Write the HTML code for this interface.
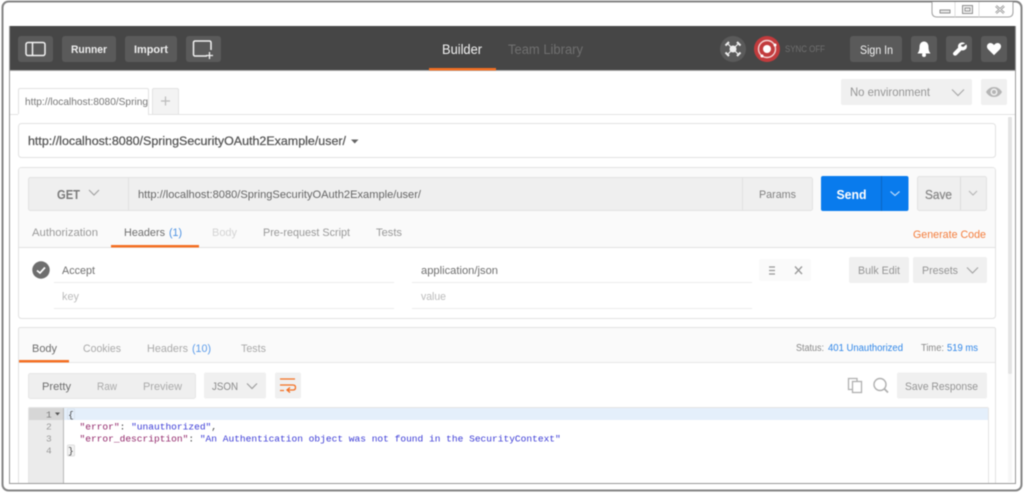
<!DOCTYPE html>
<html><head><meta charset="utf-8"><style>
html,body{margin:0;padding:0;background:#fff;width:1024px;height:493px;overflow:hidden}
svg{display:block;filter:blur(.4px)}
text{font-family:"Liberation Sans",sans-serif;font-size:11px;fill:#808080}
.m{font-family:"Liberation Mono",monospace;font-size:9.56px}
</style></head><body>
<svg width="1024" height="493" viewBox="0 0 1024 493" xmlns="http://www.w3.org/2000/svg">
<rect x="2.500" y="1.500" width="1019" height="489" rx="6" fill="#fff" stroke="#858585" stroke-width="2"/>
<path d="M9.500 26V483.500H1015.500V26" fill="none" stroke="#999" stroke-width="1"/>
<!-- window buttons -->
<path d="M932 2V12q0 5 5 5H1008q5 0 5-5V2" fill="#fff" stroke="#a0a0a0"/>
<path d="M955 2V17M979 2V17" stroke="#ddd"/>
<rect x="940" y="10" width="10" height="3" fill="#e8e8e8" stroke="#777" stroke-width=".8"/>
<rect x="962.500" y="5.500" width="10" height="8" fill="#eee" stroke="#777" stroke-width=".8"/><rect x="965" y="8" width="5" height="3" fill="none" stroke="#777" stroke-width=".7"/>
<path d="M996 6L1004 13M1004 6L996 13" stroke="#888" stroke-width="2.400"/><path d="M996 6L1004 13M1004 6L996 13" stroke="#eee" stroke-width=".9"/>
<!-- header -->
<rect x="10" y="26" width="1005" height="44" fill="#464646"/>
<rect x="10" y="70" width="1005" height="1" fill="#aaa"/>
<g fill="#5a5a5a">
<rect x="18" y="36" width="35" height="26" rx="3"/><rect x="62" y="36" width="54" height="26" rx="3"/><rect x="125" y="36" width="52" height="26" rx="3"/><rect x="186" y="36" width="35" height="26" rx="3"/>
<rect x="850" y="36" width="52" height="26" rx="3"/><rect x="911" y="36" width="26" height="26" rx="3"/><rect x="946" y="36" width="26" height="26" rx="3"/><rect x="981" y="36" width="26" height="26" rx="3"/>
<circle cx="733" cy="49" r="13"/></g>
<rect x="26" y="42.500" width="19" height="13" rx="2" fill="none" stroke="#f2f2f2" stroke-width="1.500"/><path d="M32.500 43V55" stroke="#f2f2f2" stroke-width="1.500"/>
<text x="71" y="53" textLength="36" lengthAdjust="spacingAndGlyphs" style="font-weight:700;fill:#eee;font-size:11px">Runner</text>
<text x="134" y="53" textLength="34" lengthAdjust="spacingAndGlyphs" style="font-weight:700;fill:#eee;font-size:11px">Import</text>
<path d="M207 56H195a1.500 1.500 0 0 1-1.500-1.500V42.500A1.500 1.500 0 0 1 195 41H209.500a1.500 1.500 0 0 1 1.500 1.500V50" fill="none" stroke="#f2f2f2" stroke-width="1.500"/><path d="M206 55.500H213M209.500 52V59" stroke="#f2f2f2" stroke-width="1.300"/>
<text x="442" y="54" textLength="40" lengthAdjust="spacingAndGlyphs" style="font-size:13.500px;fill:#f2f2f2;font-weight:400">Builder</text>
<rect x="429" y="68" width="67" height="2.500" fill="#f47023"/>
<text x="508" y="54" textLength="75" lengthAdjust="spacingAndGlyphs" style="font-size:13.500px;fill:#6f6f6f">Team Library</text>
<!-- satellite -->
<g fill="none" stroke="#eee"><circle cx="733" cy="49" r="3.500" fill="#eee" stroke="none"/><path d="M728 44L738 54M738 44L728 54" stroke-width="1.200"/><path d="M725.500 45.500L729 42M737 56L740.500 52.500M737 42L740.500 45.500M725.500 52.500L729 56" stroke-width="2"/></g>
<!-- sync -->
<circle cx="767" cy="49" r="13" fill="#c23b3d"/><circle cx="767" cy="49" r="8.500" fill="none" stroke="#f3d5d5" stroke-width="1.400"/><circle cx="767" cy="49" r="4" fill="#fff"/><circle cx="775" cy="45" r="1.500" fill="#fff"/><circle cx="762" cy="56" r="1.500" fill="#fff"/>
<text x="785" y="52" textLength="40" lengthAdjust="spacingAndGlyphs" style="font-size:8.800px;fill:#707070">SYNC OFF</text>
<text x="860" y="54" textLength="33" lengthAdjust="spacingAndGlyphs" style="font-size:12.200px;fill:#f2f2f2">Sign In</text>
<path d="M924 41.500c-3 0-4.500 2.500-4.500 5.500 0 3.500-1 5-2 6.500h13c-1-1.500-2-3-2-6.500 0-3-1.500-5.500-4.500-5.500z" fill="#fff"/><circle cx="924" cy="55" r="2" fill="#fff"/>
<path transform="translate(959 49) scale(.8) translate(-960 -49.500)" d="M966.500 42.500c-2.500-1.500-6-.5-7 2-.5 1.500-.3 2.500 0 3.500l-6 6c-1 1 -.5 2.500 .5 3s2 .5 3-.5l6-6c1.500 .5 3.500 .3 5-1 1.500-1.500 1.700-3.300 1-5l-3.500 3-3-1-.5-2.500z" fill="#fff" stroke="#fff" stroke-width="1"/>
<path transform="translate(994 49) scale(.88) translate(-994 -49.500)" d="M994 56.500l-6.500-6.500c-2-2-2-5 0-6.500s4.500-1 6.500 1.500c2-2.500 4.500-3 6.500-1.500s2 4.500 0 6.500z" fill="#fff"/>
<!-- tabs -->
<path d="M10 114.500H1015" stroke="#e4e4e4"/>
<path d="M18.500 115V90q0-1.500 1.500-1.500H147q1.500 0 1.500 1.500V115" fill="#fff" stroke="#e2e2e2"/>
<rect x="18" y="114" width="130" height="2" fill="#fff"/>
<text x="25" y="105" textLength="123" lengthAdjust="spacingAndGlyphs" style="font-size:10.200px;fill:#777">http://localhost:8080/Spring</text>
<path d="M152.500 114V90q0-1.500 1.500-1.500H177q1.500 0 1.500 1.500V114" fill="#f3f3f3" stroke="#e2e2e2"/>
<path d="M161 101H170M165.500 96.500V105.500" stroke="#bbb" stroke-width="1.200"/>
<rect x="841" y="79" width="131" height="26" rx="2" fill="#f0f0f0"/>
<text x="850" y="96" textLength="80" lengthAdjust="spacingAndGlyphs" style="font-size:11.700px;fill:#959595">No environment</text>
<path d="M952 89.500L958 95.500L964 89.500" fill="none" stroke="#aaa" stroke-width="1.200"/>
<rect x="981" y="79" width="26" height="26" rx="2" fill="#f0f0f0"/>
<path d="M986 92c2-3.500 5-5 8-5s6 1.500 8 5c-2 3.500-5 5-8 5s-6-1.500-8-5z" fill="#b5b5b5"/><circle cx="994" cy="92" r="3.500" fill="#f0f0f0"/><circle cx="994" cy="92" r="2" fill="#b5b5b5"/>
<!-- scrollbar -->
<rect x="1008" y="117" width="4" height="365" fill="#f7f7f7"/><rect x="1008" y="117" width="4" height="257" rx="1.500" fill="#e4e4e4"/>
<!-- url box -->
<rect x="18.500" y="123.500" width="977" height="34" rx="3" fill="#fff" stroke="#e2e2e2"/>
<text x="28" y="145" textLength="318" lengthAdjust="spacingAndGlyphs" style="font-size:12.300px;fill:#555;font-weight:400;stroke:#555;stroke-width:.25">http://localhost:8080/SpringSecurityOAuth2Example/user/</text>
<path d="M351 139.500H358.500L354.700 143.500z" fill="#666"/>
<!-- request panel -->
<rect x="18.500" y="167.500" width="977" height="151" rx="3" fill="#fff" stroke="#e2e2e2"/>
<path d="M19 247V170q0-2 2-2H993q2 0 2 2V247z" fill="#fafafa"/>
<path d="M19 247.500H995" stroke="#e2e2e2"/>
<rect x="28.500" y="177.500" width="784" height="33" rx="2" fill="#efefef" stroke="#e2e2e2"/>
<path d="M128.500 178V210M742.500 178V210" stroke="#e2e2e2"/>
<text x="57" y="199" textLength="23" lengthAdjust="spacingAndGlyphs" style="font-size:12.500px;font-weight:700;fill:#7a7a7a">GET</text>
<path d="M89 190L94 195L99 190" fill="none" stroke="#a5a5a5" stroke-width="1.200"/>
<text x="138" y="198" textLength="283" lengthAdjust="spacingAndGlyphs" style="font-size:11.300px;fill:#666">http://localhost:8080/SpringSecurityOAuth2Example/user/</text>
<text x="759" y="198" textLength="37" lengthAdjust="spacingAndGlyphs" style="font-size:11.300px;fill:#808080">Params</text>
<rect x="821" y="176" width="87.500" height="35" rx="2" fill="#097bed"/>
<path d="M881.500 176V211" stroke="#0a67c4"/>
<text x="836.500" y="199" textLength="30" lengthAdjust="spacingAndGlyphs" style="font-size:13px;font-weight:700;fill:#fff">Send</text>
<path d="M890.500 191.500L895 195.500L899.500 191.500" fill="none" stroke="#b8d8fb" stroke-width="1.200"/>
<rect x="917.500" y="176.500" width="69" height="34" rx="2" fill="#efefef" stroke="#e2e2e2"/>
<path d="M960.500 177V210" stroke="#dcdcdc"/>
<text x="925" y="199" textLength="27" lengthAdjust="spacingAndGlyphs" style="font-size:12.800px;fill:#888;stroke:#888;stroke-width:.25">Save</text>
<path d="M969 191L973 195L977 191" fill="none" stroke="#b5b5b5" stroke-width="1.100"/>
<text x="32" y="236" textLength="66" lengthAdjust="spacingAndGlyphs" style="font-size:11.300px;fill:#999">Authorization</text>
<text x="124" y="236" textLength="41" lengthAdjust="spacingAndGlyphs" style="font-size:11.300px;fill:#6e6e6e">Headers</text>
<text x="169" y="236" textLength="13" lengthAdjust="spacingAndGlyphs" style="font-size:11.300px;fill:#4a90e2">(1)</text>
<text x="212" y="236" textLength="25" lengthAdjust="spacingAndGlyphs" style="font-size:11.300px;fill:#d4d4d4">Body</text>
<text x="263" y="236" textLength="87" lengthAdjust="spacingAndGlyphs" style="font-size:11.300px;fill:#999">Pre-request Script</text>
<text x="376" y="236" textLength="26" lengthAdjust="spacingAndGlyphs" style="font-size:11.300px;fill:#999">Tests</text>
<text x="913" y="238" textLength="73" lengthAdjust="spacingAndGlyphs" style="font-size:11.300px;fill:#f47d3c">Generate Code</text>
<rect x="111" y="245" width="88" height="2.500" fill="#f47023"/>
<circle cx="41" cy="270" r="8.700" fill="#6e6e6e"/><path d="M37 270.500L40 273L45 267.500" fill="none" stroke="#fff" stroke-width="1.700"/>
<text x="62" y="274" textLength="33" lengthAdjust="spacingAndGlyphs" style="font-size:11.300px;fill:#707070">Accept</text>
<text x="62" y="300" textLength="17" lengthAdjust="spacingAndGlyphs" style="font-size:11.300px;fill:#bbb">key</text>
<text x="421" y="274" textLength="77" lengthAdjust="spacingAndGlyphs" style="font-size:11.300px;fill:#707070">application/json</text>
<text x="421" y="300" textLength="25" lengthAdjust="spacingAndGlyphs" style="font-size:11.300px;fill:#bbb">value</text>
<path d="M54 282.500H394M54 308.500H394M412 282.500H752M412 308.500H752" stroke="#ededed"/>
<rect x="759" y="259" width="52" height="22" rx="2" fill="#fafafa"/>
<path d="M769 267H775M769 270.500H775M769 274H775" stroke="#999" stroke-width="1.200"/>
<path d="M795 266.500L802 274M802 266.500L795 274" stroke="#999" stroke-width="1.300"/>
<rect x="849" y="257" width="60" height="26" rx="2" fill="#f0f0f0"/>
<rect x="913" y="257" width="74" height="26" rx="2" fill="#f0f0f0"/>
<text x="858" y="274" textLength="42" lengthAdjust="spacingAndGlyphs" style="font-size:11.300px;fill:#959595">Bulk Edit</text>
<text x="922" y="274" textLength="36" lengthAdjust="spacingAndGlyphs" style="font-size:11.300px;fill:#959595">Presets</text>
<path d="M967 267.500L972.500 273L978 267.500" fill="none" stroke="#a5a5a5" stroke-width="1.200"/>
<!-- response panel -->
<path d="M18.500 483V329.500q0-2 2-2H993.500q2 0 2 2V483" fill="#fff" stroke="#e2e2e2"/>
<path d="M19 362V330q0-2 2-2H993q2 0 2 2V362z" fill="#fafafa"/>
<path d="M19 362.500H995" stroke="#e6e6e6"/>
<rect x="19" y="360" width="50" height="2.500" fill="#f47023"/>
<text x="32" y="352" textLength="25" lengthAdjust="spacingAndGlyphs" style="font-size:11.300px;fill:#6e6e6e">Body</text>
<text x="83" y="352" textLength="38" lengthAdjust="spacingAndGlyphs" style="font-size:11.300px;fill:#aaa">Cookies</text>
<text x="147" y="352" textLength="41" lengthAdjust="spacingAndGlyphs" style="font-size:11.300px;fill:#aaa">Headers</text>
<text x="192" y="352" textLength="19" lengthAdjust="spacingAndGlyphs" style="font-size:11.300px;fill:#5a9bea">(10)</text>
<text x="241" y="352" textLength="25" lengthAdjust="spacingAndGlyphs" style="font-size:11.300px;fill:#aaa">Tests</text>
<text x="796" y="351" textLength="28" lengthAdjust="spacingAndGlyphs" style="font-size:9.700px;fill:#888">Status:</text>
<text x="828" y="351" textLength="75" lengthAdjust="spacingAndGlyphs" style="font-size:9.700px;fill:#2f86e8">401 Unauthorized</text>
<text x="921" y="351" textLength="23" lengthAdjust="spacingAndGlyphs" style="font-size:9.700px;fill:#888">Time:</text>
<text x="947" y="351" textLength="31" lengthAdjust="spacingAndGlyphs" style="font-size:9.700px;fill:#2f86e8">519 ms</text>
<rect x="28.500" y="373.500" width="167" height="25" rx="2" fill="#efefef" stroke="#e6e6e6"/>
<text x="42" y="390" textLength="29" lengthAdjust="spacingAndGlyphs" style="font-size:11.300px;fill:#6e6e6e">Pretty</text>
<text x="97" y="390" textLength="20" lengthAdjust="spacingAndGlyphs" style="font-size:11.300px;fill:#aaa">Raw</text>
<text x="143" y="390" textLength="39" lengthAdjust="spacingAndGlyphs" style="font-size:11.300px;fill:#aaa">Preview</text>
<rect x="204" y="372.500" width="62" height="26" rx="2" fill="#f0f0f0"/>
<text x="212" y="390" textLength="26" lengthAdjust="spacingAndGlyphs" style="font-size:11.300px;fill:#8a8a8a">JSON</text>
<path d="M247 383.500L252 388.500L257 383.500" fill="none" stroke="#a0a0a0" stroke-width="1.200"/>
<rect x="275" y="372.500" width="26" height="26" rx="2" fill="#f0f0f0"/>
<path d="M280 379H295M280 385H293q2.500 0 2.500 2.500T293 390H287M280 390.500H284M290 387.500L287 390L290 392.500" fill="none" stroke="#f47023" stroke-width="1.300"/>
<path d="M853 389.500H848.500V378.500H857V381" fill="none" stroke="#b0b0b0" stroke-width="1.300"/><rect x="852.500" y="381.500" width="9" height="11" fill="#fff" stroke="#b0b0b0" stroke-width="1.300"/>
<circle cx="880" cy="384.500" r="6" fill="none" stroke="#b0b0b0" stroke-width="1.400"/><path d="M884.500 389L888 392.500" stroke="#b0b0b0" stroke-width="1.800"/>
<rect x="897" y="372.500" width="90" height="26" rx="2" fill="#f0f0f0"/>
<text x="905" y="390" textLength="73" lengthAdjust="spacingAndGlyphs" style="font-size:11.300px;fill:#959595">Save Response</text>
<!-- editor -->
<path d="M28.500 483V409q0-1.500 1.500-1.500H987q1.500 0 1.500 1.500V483" fill="#fff" stroke="#e4e4e4"/>
<rect x="29" y="408" width="959" height="12" fill="#e4effb"/>
<rect x="29" y="408" width="34" height="75" fill="#ebebeb"/>
<rect x="29" y="408" width="34" height="12" fill="#d6d6d6"/>
<path d="M63.500 408V483" stroke="#b9b9b9"/>
<text class="m" x="46" y="417.500" style="fill:#777">1</text><text class="m" x="46" y="429.500" style="fill:#999">2</text><text class="m" x="46" y="441.500" style="fill:#999">3</text><text class="m" x="46" y="453.500" style="fill:#999">4</text>
<path d="M55 412.500H60L57.500 415.500z" fill="#555"/>
<rect x="67.500" y="409" width="7" height="10" fill="none" stroke="#d5dfe8" stroke-width=".7"/>
<text class="m" x="68" y="417.500" style="fill:#444">{</text>
<text class="m" x="79.500" y="429.500" style="fill:#444"><tspan fill="#92276a">"error"</tspan>: <tspan fill="#3a3ad6">"unauthorized"</tspan>,</text>
<text class="m" x="79.500" y="441.500" style="fill:#444"><tspan fill="#92276a">"error_description"</tspan>: <tspan fill="#3a3ad6">"An Authentication object was not found in the SecurityContext"</tspan></text>
<rect x="67.500" y="445" width="7" height="11" rx="1" fill="#f2f2f2" stroke="#d5d5d5" stroke-width=".7"/>
<text class="m" x="68" y="453.500" style="fill:#444">}</text>
</svg>
</body></html>
